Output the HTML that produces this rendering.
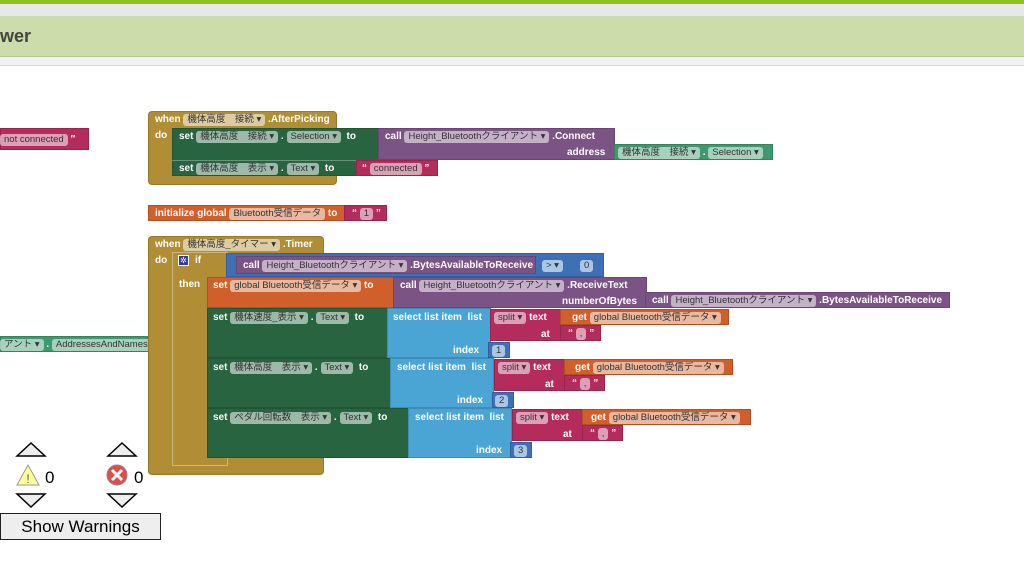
<!DOCTYPE html><html><head><meta charset="utf-8"><style>
body{margin:0;width:1024px;height:562px;overflow:hidden;background:#fff;position:relative;font-family:"Liberation Sans","Noto Sans CJK JP",sans-serif}
.a{position:absolute}
.b{position:absolute;box-sizing:border-box;border:1px solid rgba(0,0,0,.15)}
.t{position:absolute;color:#fff;font-size:10px;line-height:15px;white-space:nowrap;font-weight:bold}
.f{display:inline-block;padding:0 4px;border-radius:3px;background:rgba(255,255,255,.55);color:#333;font-size:9.5px;line-height:12px;font-weight:normal}
.G{background:#b18e35}.S{background:#27643f}.P{background:#7c5385}.R{background:#b32c5c}.O{background:#d15f2b}.L{background:#4aa5d5}.M{background:#3f6fb5}.C{background:#3e9a6e}
</style></head><body>
<div class="a" style="left:0;top:0;width:1024px;height:4px;background:#8fc11a"></div>
<div class="a" style="left:0;top:4px;width:1024px;height:12px;background:#e8e8e8"></div>
<div class="a" style="left:0;top:16px;width:1024px;height:40px;background:#cddcab;border-bottom:1px solid #b5c596"></div>
<div class="a" style="left:0;top:57px;width:1024px;height:8px;background:#f2f2f2;border-bottom:1px solid #ddd"></div>
<div class="a" style="left:0;top:26px;font-size:18px;font-weight:bold;color:#444">wer</div>

<!-- left partial -->
<div class="b R" style="left:0;top:128px;width:89px;height:22px"></div>
<div class="t" style="left:0;top:132px"><span class="f">not connected</span> ″</div>
<div class="b C" style="left:0;top:336px;width:148px;height:16px"></div>
<div class="t" style="left:0;top:337px"><span class="f">アント ▾</span> . <span class="f">AddressesAndNames</span></div>

<!-- block 1 -->
<div class="b G" style="left:148px;top:111px;width:189px;height:74px;border-radius:4px"></div>
<div class="t" style="left:155px;top:112px">when <span class="f">機体高度　接続 ▾</span> .AfterPicking</div>
<div class="t" style="left:155px;top:128px">do</div>
<div class="b S" style="left:172px;top:128px;width:208px;height:48px"></div>
<div class="t" style="left:179px;top:129px">set <span class="f">機体高度　接続 ▾</span> . <span class="f">Selection ▾</span> &nbsp;to</div>
<div class="t" style="left:179px;top:161px">set <span class="f">機体高度　表示 ▾</span> . <span class="f">Text ▾</span> &nbsp;to</div>
<div class="a" style="left:172px;top:160px;width:188px;height:1px;background:rgba(255,255,255,.3)"></div>
<div class="b P" style="left:378px;top:128px;width:237px;height:32px"></div>
<div class="t" style="left:385px;top:129px">call <span class="f">Height_Bluetoothクライアント ▾</span> .Connect</div>
<div class="t" style="left:567px;top:145px">address</div>
<div class="b C" style="left:614px;top:144px;width:159px;height:16px"></div>
<div class="t" style="left:618px;top:145px"><span class="f">機体高度　接続 ▾</span> . <span class="f">Selection ▾</span></div>
<div class="b R" style="left:356px;top:160px;width:82px;height:16px"></div>
<div class="t" style="left:362px;top:161px">“ <span class="f">connected</span> ”</div>

<!-- init global -->
<div class="b O" style="left:148px;top:205px;width:197px;height:16px"></div>
<div class="t" style="left:155px;top:206px">initialize global <span class="f">Bluetooth受信データ</span> to</div>
<div class="b R" style="left:344px;top:205px;width:43px;height:16px"></div>
<div class="t" style="left:352px;top:206px">“ <span class="f">1</span> ”</div>

<!-- timer -->
<div class="b G" style="left:148px;top:236px;width:176px;height:239px;border-radius:4px"></div>
<div class="t" style="left:155px;top:237px">when <span class="f">機体高度_タイマー ▾</span> .Timer</div>
<div class="t" style="left:155px;top:253px">do</div>
<div class="b G" style="left:172px;top:252px;width:56px;height:214px;border-color:rgba(255,255,255,.35)"></div>
<div class="a" style="left:178px;top:255px;width:11px;height:11px;background:#2f3ea8;border:1px solid #fff;box-sizing:border-box;color:#fff;font-size:8px;line-height:9px;text-align:center">✲</div>
<div class="t" style="left:195px;top:253px">if</div>
<div class="t" style="left:179px;top:277px">then</div>
<div class="b M" style="left:226px;top:253px;width:378px;height:24px"></div>
<div class="b P" style="left:236px;top:256px;width:300px;height:18px"></div>
<div class="t" style="left:243px;top:258px">call <span class="f">Height_Bluetoothクライアント ▾</span> .BytesAvailableToReceive</div>
<div class="t" style="left:542px;top:258px"><span class="f" style="background:#aac6e6">&gt; ▾</span></div>
<div class="t" style="left:580px;top:258px"><span class="f" style="background:#aac6e6">0</span></div>

<div class="b O" style="left:207px;top:277px;width:187px;height:31px"></div>
<div class="t" style="left:213px;top:278px">set <span class="f">global Bluetooth受信データ ▾</span> to</div>
<div class="b P" style="left:393px;top:277px;width:254px;height:31px"></div>
<div class="t" style="left:400px;top:278px">call <span class="f">Height_Bluetoothクライアント ▾</span> .ReceiveText</div>
<div class="t" style="left:562px;top:294px">numberOfBytes</div>
<div class="b P" style="left:645px;top:292px;width:305px;height:16px"></div>
<div class="t" style="left:652px;top:293px">call <span class="f">Height_Bluetoothクライアント ▾</span> .BytesAvailableToReceive</div>

<!-- set rows -->
<div class="b S" style="left:207px;top:308px;width:182px;height:50px"></div>
<div class="t" style="left:213px;top:310px">set <span class="f">機体速度_表示 ▾</span> . <span class="f">Text ▾</span> &nbsp;to</div>
<div class="b L" style="left:387px;top:308px;width:104px;height:50px"></div>
<div class="t" style="left:393px;top:310px">select list item &nbsp;list</div>
<div class="t" style="left:453px;top:343px">index</div>
<div class="b M" style="left:488px;top:342px;width:22px;height:16px"></div>
<div class="t" style="left:492px;top:343px"><span class="f" style="background:#aac6e6">1</span></div>
<div class="b R" style="left:490px;top:309px;width:71px;height:32px"></div>
<div class="t" style="left:494px;top:310px"><span class="f">split ▾</span> text</div>
<div class="t" style="left:541px;top:327px">at</div>
<div class="b R" style="left:560px;top:325px;width:41px;height:16px"></div>
<div class="t" style="left:568px;top:326px">“ <span class="f">,</span> ”</div>
<div class="b O" style="left:560px;top:309px;width:169px;height:16px"></div>
<div class="t" style="left:572px;top:310px">get <span class="f">global Bluetooth受信データ ▾</span></div>

<div class="b S" style="left:207px;top:358px;width:184px;height:50px"></div>
<div class="t" style="left:213px;top:360px">set <span class="f">機体高度　表示 ▾</span> . <span class="f">Text ▾</span> &nbsp;to</div>
<div class="b L" style="left:390px;top:358px;width:104px;height:50px"></div>
<div class="t" style="left:397px;top:360px">select list item &nbsp;list</div>
<div class="t" style="left:457px;top:393px">index</div>
<div class="b M" style="left:492px;top:392px;width:22px;height:16px"></div>
<div class="t" style="left:495px;top:393px"><span class="f" style="background:#aac6e6">2</span></div>
<div class="b R" style="left:494px;top:359px;width:71px;height:32px"></div>
<div class="t" style="left:498px;top:360px"><span class="f">split ▾</span> text</div>
<div class="t" style="left:545px;top:377px">at</div>
<div class="b R" style="left:564px;top:375px;width:41px;height:16px"></div>
<div class="t" style="left:572px;top:376px">“ <span class="f">,</span> ”</div>
<div class="b O" style="left:564px;top:359px;width:169px;height:16px"></div>
<div class="t" style="left:575px;top:360px">get <span class="f">global Bluetooth受信データ ▾</span></div>

<div class="b S" style="left:207px;top:408px;width:202px;height:50px"></div>
<div class="t" style="left:213px;top:410px">set <span class="f">ペダル回転数　表示 ▾</span> . <span class="f">Text ▾</span> &nbsp;to</div>
<div class="b L" style="left:408px;top:408px;width:104px;height:50px"></div>
<div class="t" style="left:415px;top:410px">select list item &nbsp;list</div>
<div class="t" style="left:476px;top:443px">index</div>
<div class="b M" style="left:510px;top:442px;width:22px;height:16px"></div>
<div class="t" style="left:514px;top:443px"><span class="f" style="background:#aac6e6">3</span></div>
<div class="b R" style="left:512px;top:409px;width:71px;height:32px"></div>
<div class="t" style="left:516px;top:410px"><span class="f">split ▾</span> text</div>
<div class="t" style="left:563px;top:427px">at</div>
<div class="b R" style="left:582px;top:425px;width:41px;height:16px"></div>
<div class="t" style="left:590px;top:426px">“ <span class="f">,</span> ”</div>
<div class="b O" style="left:582px;top:409px;width:169px;height:16px"></div>
<div class="t" style="left:591px;top:410px">get <span class="f">global Bluetooth受信データ ▾</span></div>

<!-- warnings -->
<svg class="a" style="left:0;top:438px" width="170" height="72">
<polygon points="17,18 31,5 45,18" fill="#eee" stroke="#000" stroke-width="1.5"/>
<polygon points="108,18 122,5 136,18" fill="#eee" stroke="#000" stroke-width="1.5"/>
<polygon points="17,56 31,69 45,56" fill="#eee" stroke="#000" stroke-width="1.5"/>
<polygon points="108,56 122,69 136,56" fill="#eee" stroke="#000" stroke-width="1.5"/>
<polygon points="28,27 39,47 17,47" fill="#ffff99" stroke="#999"/>
<text x="28" y="45" font-size="12" text-anchor="middle" fill="#555" font-family="Liberation Sans">!</text>
<circle cx="117" cy="37" r="10" fill="#e24b4b" stroke="#888"/>
<path d="M112 32L122 42M122 32L112 42" stroke="#fff" stroke-width="3"/>
<text x="45" y="45" font-size="17" font-family="Liberation Sans">0</text>
<text x="134" y="45" font-size="17" font-family="Liberation Sans">0</text>
</svg>
<div class="a" style="left:0;top:513px;width:161px;height:27px;box-sizing:border-box;border:1px solid #222;background:#eee;font-size:17px;line-height:25px;text-align:center">Show Warnings</div>
</body></html>
